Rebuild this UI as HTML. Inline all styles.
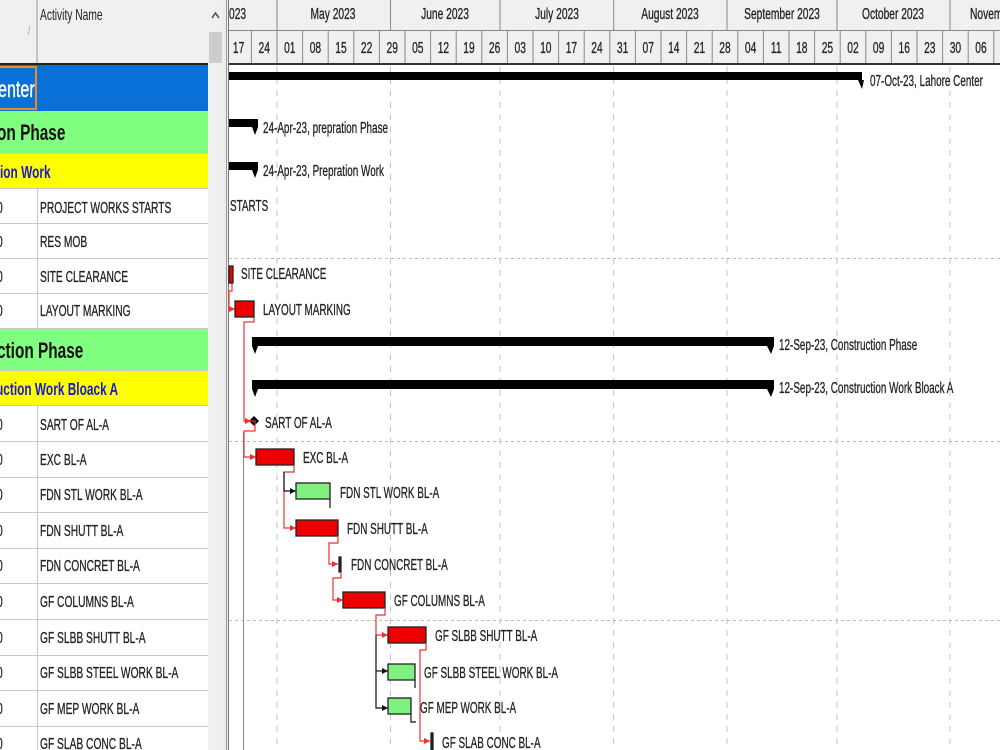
<!DOCTYPE html>
<html><head><meta charset="utf-8"><style>
html,body{margin:0;padding:0;width:1000px;height:750px;overflow:hidden;background:#fff}
svg{display:block}
text{font-family:"Liberation Sans",Arial,sans-serif}
</style></head><body>
<svg width="1000" height="750" viewBox="0 0 1000 750" xmlns="http://www.w3.org/2000/svg">
<!-- LEFT TABLE -->
<rect x="0" y="0" width="208" height="64" fill="#f0f0f0"/>
<line x1="37" y1="0" x2="37" y2="64" stroke="#999"/>
<text transform="translate(40,20) scale(.64,1)" font-size="16" fill="#222">Activity Name</text>
<text transform="translate(28,35) scale(.64,1)" font-size="13" fill="#999">/</text>
<rect x="0" y="63" width="208" height="2" fill="#222"/>
<rect x="0" y="65" width="208" height="46" fill="#0870d6"/>
<rect x="-2" y="67" width="38" height="42" fill="none" stroke="#f08a24" stroke-width="2"/>
<text transform="translate(-2,97) scale(.7,1)" font-size="23" fill="#fff" stroke="#fff" stroke-width=".4">enter</text>
<rect x="0" y="111" width="208" height="42" fill="#80ff80"/>
<line x1="0" y1="111.5" x2="208" y2="111.5" stroke="#ccc"/>
<text transform="translate(-3,140) scale(.7,1)" font-size="22" font-weight="bold" fill="#111">on Phase</text>
<rect x="0" y="153" width="208" height="35" fill="#ffff00"/>
<line x1="0" y1="153.5" x2="208" y2="153.5" stroke="#ccc"/>
<text transform="translate(-4,178) scale(.66,1)" font-size="18" font-weight="bold" fill="#1a1acc">tion Work</text>

<g stroke="#c8c8c8">
<line x1="0" y1="188.5" x2="208" y2="188.5"/>
<line x1="0" y1="223.5" x2="208" y2="223.5"/>
<line x1="0" y1="258.5" x2="208" y2="258.5"/>
<line x1="0" y1="293.5" x2="208" y2="293.5"/>
<line x1="0" y1="328.5" x2="208" y2="328.5"/>
<line x1="37.5" y1="188" x2="37.5" y2="328"/>
</g>
<g font-size="16" fill="#222" stroke="#222" stroke-width=".3">
<text transform="translate(-3,213) scale(.64,1)">0</text><text transform="translate(40,213) scale(.64,1)">PROJECT WORKS STARTS</text>
<text transform="translate(-3,247) scale(.64,1)">0</text><text transform="translate(40,247) scale(.64,1)">RES MOB</text>
<text transform="translate(-3,282) scale(.64,1)">0</text><text transform="translate(40,282) scale(.64,1)">SITE CLEARANCE</text>
<text transform="translate(-3,316) scale(.64,1)">0</text><text transform="translate(40,316) scale(.64,1)">LAYOUT MARKING</text>
</g>
<rect x="0" y="329" width="208" height="41" fill="#80ff80"/>
<text transform="translate(-3,358) scale(.7,1)" font-size="22" font-weight="bold" fill="#111">ction Phase</text>
<rect x="0" y="370" width="208" height="35" fill="#ffff00"/>
<line x1="0" y1="370.5" x2="208" y2="370.5" stroke="#ccc"/>
<text transform="translate(-4,395) scale(.66,1)" font-size="18" font-weight="bold" fill="#1a1acc">uction Work Bloack A</text>

<g stroke="#c8c8c8">
<line x1="0" y1="405.5" x2="208" y2="405.5"/>
<line x1="0" y1="441.5" x2="208" y2="441.5"/>
<line x1="0" y1="477.5" x2="208" y2="477.5"/>
<line x1="0" y1="512.5" x2="208" y2="512.5"/>
<line x1="0" y1="548.5" x2="208" y2="548.5"/>
<line x1="0" y1="583.5" x2="208" y2="583.5"/>
<line x1="0" y1="619.5" x2="208" y2="619.5"/>
<line x1="0" y1="655.5" x2="208" y2="655.5"/>
<line x1="0" y1="690.5" x2="208" y2="690.5"/>
<line x1="0" y1="726.5" x2="208" y2="726.5"/>
<line x1="37.5" y1="405" x2="37.5" y2="750"/>
</g>
<g font-size="16" fill="#222" stroke="#222" stroke-width=".3">
<text transform="translate(-3,430) scale(.64,1)">0</text><text transform="translate(40,430) scale(.64,1)">SART OF AL-A</text>
<text transform="translate(-3,465) scale(.64,1)">0</text><text transform="translate(40,465) scale(.64,1)">EXC BL-A</text>
<text transform="translate(-3,500) scale(.64,1)">0</text><text transform="translate(40,500) scale(.64,1)">FDN STL WORK BL-A</text>
<text transform="translate(-3,536) scale(.64,1)">0</text><text transform="translate(40,536) scale(.64,1)">FDN SHUTT BL-A</text>
<text transform="translate(-3,571) scale(.64,1)">0</text><text transform="translate(40,571) scale(.64,1)">FDN CONCRET BL-A</text>
<text transform="translate(-3,607) scale(.64,1)">0</text><text transform="translate(40,607) scale(.64,1)">GF COLUMNS BL-A</text>
<text transform="translate(-3,643) scale(.64,1)">0</text><text transform="translate(40,643) scale(.64,1)">GF SLBB SHUTT BL-A</text>
<text transform="translate(-3,678) scale(.64,1)">0</text><text transform="translate(40,678) scale(.64,1)">GF SLBB STEEL WORK BL-A</text>
<text transform="translate(-3,714) scale(.64,1)">0</text><text transform="translate(40,714) scale(.64,1)">GF MEP WORK BL-A</text>
<text transform="translate(-3,749) scale(.64,1)">0</text><text transform="translate(40,749) scale(.64,1)">GF SLAB CONC BL-A</text>
</g>

<!-- SCROLLBAR -->
<rect x="208" y="0" width="15" height="750" fill="#f0f0f0"/>
<path d="M212 18 L215.5 13 L219 18" fill="none" stroke="#555" stroke-width="1.6"/>
<rect x="209" y="32" width="13" height="31" fill="#cdcdcd"/>
<rect x="223" y="0" width="6" height="750" fill="#ececec"/>
<line x1="226.5" y1="0" x2="226.5" y2="750" stroke="#9a9a9a"/>
<line x1="228.5" y1="0" x2="228.5" y2="750" stroke="#777"/>

<!-- GANTT HEADER -->
<rect x="229" y="0" width="771" height="64" fill="#f0f0f0"/>
<line x1="229" y1="30.5" x2="1000" y2="30.5" stroke="#888"/>
<rect x="229" y="63" width="771" height="2" fill="#333"/>
<g stroke="#888">
<line x1="277" y1="0" x2="277" y2="30"/><line x1="390.5" y1="0" x2="390.5" y2="30"/><line x1="500" y1="0" x2="500" y2="30"/>
<line x1="613.7" y1="0" x2="613.7" y2="30"/><line x1="727" y1="0" x2="727" y2="30"/><line x1="837" y1="0" x2="837" y2="30"/><line x1="950" y1="0" x2="950" y2="30"/>
</g>
<g font-size="16" fill="#222" text-anchor="middle" stroke="#222" stroke-width=".3">
<text transform="translate(333,19) scale(.64,1)">May 2023</text>
<text transform="translate(445,19) scale(.64,1)">June 2023</text>
<text transform="translate(557,19) scale(.64,1)">July 2023</text>
<text transform="translate(670,19) scale(.64,1)">August 2023</text>
<text transform="translate(782,19) scale(.64,1)">September 2023</text>
<text transform="translate(893,19) scale(.64,1)">October 2023</text>
</g>
<g font-size="16" fill="#222" stroke="#222" stroke-width=".3">
<text transform="translate(229,19) scale(.64,1)">023</text>
<text transform="translate(970,19) scale(.64,1)">Novem</text>
</g>
<g stroke="#888">
<line x1="251.4" y1="31" x2="251.4" y2="63"/><line x1="277" y1="31" x2="277" y2="63"/><line x1="302.6" y1="31" x2="302.6" y2="63"/><line x1="328.2" y1="31" x2="328.2" y2="63"/><line x1="353.8" y1="31" x2="353.8" y2="63"/><line x1="379.4" y1="31" x2="379.4" y2="63"/><line x1="405" y1="31" x2="405" y2="63"/><line x1="430.6" y1="31" x2="430.6" y2="63"/><line x1="456.2" y1="31" x2="456.2" y2="63"/><line x1="481.8" y1="31" x2="481.8" y2="63"/><line x1="507.4" y1="31" x2="507.4" y2="63"/><line x1="533" y1="31" x2="533" y2="63"/><line x1="558.6" y1="31" x2="558.6" y2="63"/><line x1="584.2" y1="31" x2="584.2" y2="63"/><line x1="609.8" y1="31" x2="609.8" y2="63"/><line x1="635.4" y1="31" x2="635.4" y2="63"/><line x1="661" y1="31" x2="661" y2="63"/><line x1="686.6" y1="31" x2="686.6" y2="63"/><line x1="712.2" y1="31" x2="712.2" y2="63"/><line x1="737.8" y1="31" x2="737.8" y2="63"/><line x1="763.4" y1="31" x2="763.4" y2="63"/><line x1="789" y1="31" x2="789" y2="63"/><line x1="814.6" y1="31" x2="814.6" y2="63"/><line x1="840.2" y1="31" x2="840.2" y2="63"/><line x1="865.8" y1="31" x2="865.8" y2="63"/><line x1="891.4" y1="31" x2="891.4" y2="63"/><line x1="917" y1="31" x2="917" y2="63"/><line x1="942.6" y1="31" x2="942.6" y2="63"/><line x1="968.2" y1="31" x2="968.2" y2="63"/><line x1="993.8" y1="31" x2="993.8" y2="63"/>
</g>
<g font-size="16" fill="#222" text-anchor="middle" stroke="#222" stroke-width=".3">
<text transform="translate(238.6,53) scale(.64,1)">17</text><text transform="translate(264.2,53) scale(.64,1)">24</text><text transform="translate(289.8,53) scale(.64,1)">01</text><text transform="translate(315.4,53) scale(.64,1)">08</text><text transform="translate(341,53) scale(.64,1)">15</text><text transform="translate(366.6,53) scale(.64,1)">22</text><text transform="translate(392.2,53) scale(.64,1)">29</text><text transform="translate(417.8,53) scale(.64,1)">05</text><text transform="translate(443.4,53) scale(.64,1)">12</text><text transform="translate(469,53) scale(.64,1)">19</text><text transform="translate(494.6,53) scale(.64,1)">26</text><text transform="translate(520.2,53) scale(.64,1)">03</text><text transform="translate(545.8,53) scale(.64,1)">10</text><text transform="translate(571.4,53) scale(.64,1)">17</text><text transform="translate(597,53) scale(.64,1)">24</text><text transform="translate(622.6,53) scale(.64,1)">31</text><text transform="translate(648.2,53) scale(.64,1)">07</text><text transform="translate(673.8,53) scale(.64,1)">14</text><text transform="translate(699.4,53) scale(.64,1)">21</text><text transform="translate(725,53) scale(.64,1)">28</text><text transform="translate(750.6,53) scale(.64,1)">04</text><text transform="translate(776.2,53) scale(.64,1)">11</text><text transform="translate(801.8,53) scale(.64,1)">18</text><text transform="translate(827.4,53) scale(.64,1)">25</text><text transform="translate(853,53) scale(.64,1)">02</text><text transform="translate(878.6,53) scale(.64,1)">09</text><text transform="translate(904.2,53) scale(.64,1)">16</text><text transform="translate(929.8,53) scale(.64,1)">23</text><text transform="translate(955.4,53) scale(.64,1)">30</text><text transform="translate(981,53) scale(.64,1)">06</text>
</g>

<!-- GRID -->
<g stroke="#c4c4c4" stroke-dasharray="6,6">
<line x1="277" y1="66" x2="277" y2="750"/><line x1="390.5" y1="66" x2="390.5" y2="750"/><line x1="500" y1="66" x2="500" y2="750"/>
<line x1="613.7" y1="66" x2="613.7" y2="750"/><line x1="727" y1="66" x2="727" y2="750"/><line x1="837" y1="66" x2="837" y2="750"/><line x1="950" y1="66" x2="950" y2="750"/>
</g>
<g stroke="#bbb" stroke-dasharray="3,3">
<line x1="229" y1="258.5" x2="1000" y2="258.5"/><line x1="229" y1="441.5" x2="1000" y2="441.5"/><line x1="229" y1="620.5" x2="1000" y2="620.5"/>
</g>
<line x1="243.5" y1="432" x2="243.5" y2="750" stroke="#888"/>

<!-- BARS -->
<g fill="#000">
<rect x="229" y="72" width="633" height="8"/><path d="M858 80 L864 80 L862 89 Z"/>
<rect x="229" y="119" width="29" height="8"/><path d="M252 127 L258 127 L255 135 Z"/>
<rect x="229" y="162" width="29" height="8"/><path d="M252 170 L258 170 L255 178 Z"/>
<rect x="252" y="337" width="522" height="9"/><path d="M252 346 L258 346 L255 354 Z"/><path d="M767 346 L774 346 L771 354 Z"/>
<rect x="252" y="380" width="522" height="9"/><path d="M252 389 L258 389 L255 397 Z"/><path d="M767 389 L774 389 L771 397 Z"/>
<path d="M254 416 L259 421 L254 426 L249 421 Z"/>
</g>
<!-- links -->
<g fill="none" stroke="#f03030" stroke-width="1.2">
<path d="M232 283 V291 H229 V309 H235"/>
<path d="M254 317 V322 H244 V421 H249"/>
<path d="M249 421 H255 V431 H244 V457 H256"/>
<path d="M294 466 V472 H284 V528 H296"/>
<path d="M338 537 V543 H329 V564 H338"/>
<path d="M341 573 V578 H333 V600 H343"/>
<path d="M385 609 V615 H376 V635 H388"/>
<path d="M426 644 V650 H420 V741 H430"/>
</g>
<g fill="none" stroke="#111" stroke-width="1.2">
<path d="M284 472 V491 H296"/>
<path d="M376 635 V708 H388"/>
<path d="M376 671 H388"/>
<path d="M330 499 V508"/><path d="M415 680 V688"/><path d="M411 714 V722 H416"/>
</g>
<g fill="#f03030">
<path d="M229 306 L235 309 L229 312Z"/><path d="M245 418 L251 421 L245 424Z"/><path d="M250 454 L256 457 L250 460Z"/>
<path d="M290 525 L296 528 L290 531Z"/><path d="M332 561 L338 564 L332 567Z"/><path d="M337 597 L343 600 L337 603Z"/>
<path d="M382 632 L388 635 L382 638Z"/><path d="M424 738 L430 741 L424 744Z"/>
</g>
<g fill="#111"><path d="M290 488 L296 491 L290 494Z"/><path d="M382 668 L388 671 L382 674Z"/><path d="M382 705 L388 708 L382 711Z"/></g>
<g stroke="#222" stroke-width="1.3">
<rect x="229" y="266" width="4" height="17" fill="#ee0000"/>
<rect x="235" y="301" width="19" height="16" fill="#ee0000"/>
<rect x="256" y="449" width="38" height="16" fill="#ee0000"/>
<rect x="296" y="483" width="34" height="16" fill="#80f080"/>
<rect x="296" y="520" width="42" height="16" fill="#ee0000"/>
<rect x="339" y="557" width="2" height="15" fill="#222"/>
<rect x="343" y="592" width="42" height="16" fill="#ee0000"/>
<rect x="388" y="627" width="38" height="16" fill="#ee0000"/>
<rect x="388" y="664" width="27" height="16" fill="#80f080"/>
<rect x="388" y="698" width="23" height="16" fill="#80f080"/>
<rect x="431" y="733" width="2" height="17" fill="#222"/>
</g>
<!-- labels -->
<g font-size="16" fill="#222" stroke="#222" stroke-width=".3">
<text transform="translate(870,86) scale(.62,1)">07-Oct-23, Lahore Center</text>
<text transform="translate(263,133) scale(.62,1)">24-Apr-23, prepration Phase</text>
<text transform="translate(263,176) scale(.62,1)">24-Apr-23, Prepration Work</text>
<text transform="translate(230,211) scale(.62,1)">STARTS</text>
<text transform="translate(241,279) scale(.62,1)">SITE CLEARANCE</text>
<text transform="translate(263,315) scale(.62,1)">LAYOUT MARKING</text>
<text transform="translate(779,350) scale(.62,1)">12-Sep-23, Construction Phase</text>
<text transform="translate(779,393) scale(.62,1)">12-Sep-23, Construction Work Bloack A</text>
<text transform="translate(265,428) scale(.62,1)">SART OF AL-A</text>
<text transform="translate(303,463) scale(.62,1)">EXC BL-A</text>
<text transform="translate(340,498) scale(.62,1)">FDN STL WORK BL-A</text>
<text transform="translate(347,534) scale(.62,1)">FDN SHUTT BL-A</text>
<text transform="translate(351,570) scale(.62,1)">FDN CONCRET BL-A</text>
<text transform="translate(394,606) scale(.62,1)">GF COLUMNS BL-A</text>
<text transform="translate(435,641) scale(.62,1)">GF SLBB SHUTT BL-A</text>
<text transform="translate(424,678) scale(.62,1)">GF SLBB STEEL WORK BL-A</text>
<text transform="translate(420,713) scale(.62,1)">GF MEP WORK BL-A</text>
<text transform="translate(442,748) scale(.62,1)">GF SLAB CONC BL-A</text>
</g>
</svg>
</body></html>
